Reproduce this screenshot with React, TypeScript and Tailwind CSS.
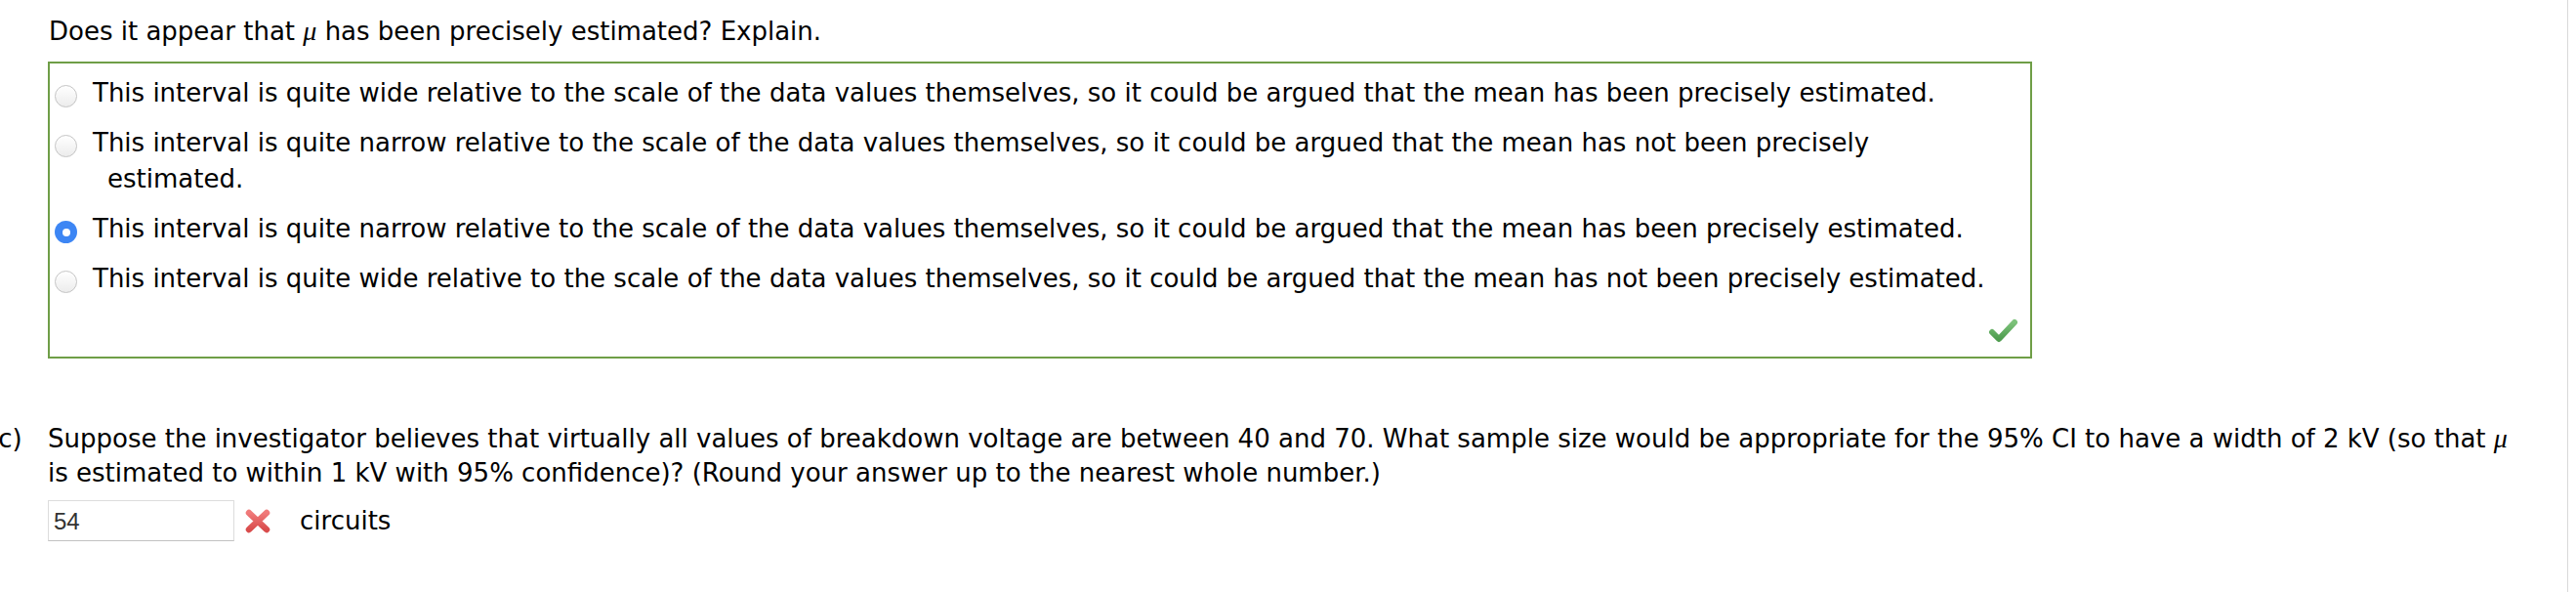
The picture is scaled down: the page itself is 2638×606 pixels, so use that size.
import React from "react";

const options = [
  {
    text: "This interval is quite wide relative to the scale of the data values themselves, so it could be argued that the mean has been precisely estimated.",
    selected: false,
  },
  {
    text: "This interval is quite narrow relative to the scale of the data values themselves, so it could be argued that the mean has not been precisely estimated.",
    selected: false,
    narrow: true,
  },
  {
    text: "This interval is quite narrow relative to the scale of the data values themselves, so it could be argued that the mean has been precisely estimated.",
    selected: true,
  },
  {
    text: "This interval is quite wide relative to the scale of the data values themselves, so it could be argued that the mean has not been precisely estimated.",
    selected: false,
  },
];

function Radio({ selected }: { selected: boolean }) {
  if (selected) {
    return (
      <div className="mt-[10px] flex h-[23px] w-[23px] shrink-0 items-center justify-center rounded-full bg-[#3d86f4]">
        <div className="h-[8px] w-[8px] rounded-full bg-white" />
      </div>
    );
  }
  return (
    <div className="mt-[10px] h-[23px] w-[23px] shrink-0 rounded-full border border-[#c4c4c4] bg-gradient-to-b from-white to-[#ececec] shadow-[inset_0_1px_1px_rgba(255,255,255,0.9)]" />
  );
}

function Mu() {
  return <span className="font-['Liberation_Serif',serif] italic text-[28px]">μ</span>;
}

export default function App() {
  return (
    <div className="relative h-[606px] w-[2638px] overflow-hidden bg-white font-['DejaVu_Sans','Verdana',sans-serif] text-[26px] leading-[37px] text-black">
      <div className="pl-[50px] pt-[13px]">
        Does it appear that <Mu /> has been precisely estimated? Explain.
      </div>

      <div className="ml-[49px] mt-[12px] flex w-[2032px] flex-col border-2 border-[#6f9e47] pb-[14px] pl-[5px] pr-[12px] pt-[12px]">
        <div className="flex flex-col gap-[14px]">
          {options.map((o, i) => (
            <div key={i} className="flex items-start">
              <Radio selected={o.selected} />
              <div
                className={`ml-[31px] indent-[-15px] ${o.narrow ? "w-[1850px]" : ""}`}
              >
                {o.text}
              </div>
            </div>
          ))}
        </div>
        <div className="mt-[22px] flex justify-end">
          <svg width="31" height="25" viewBox="0 0 31 25">
            <defs>
              <linearGradient id="gc" x1="0" y1="0" x2="0" y2="1">
                <stop offset="0" stopColor="#7cc27a" />
                <stop offset="1" stopColor="#4f9d4f" />
              </linearGradient>
            </defs>
            <path
              d="M4 14 L11 21 L27 4"
              fill="none"
              stroke="url(#gc)"
              strokeWidth="6"
              strokeLinecap="round"
              strokeLinejoin="round"
            />
          </svg>
        </div>
      </div>

      <div className="mt-[64px] flex">
        <div className="ml-[-12px] w-[61px] shrink-0">(c)</div>
        <div className="w-[2545px] leading-[35px]">
          Suppose the investigator believes that virtually all values of breakdown voltage are between 40 and 70. What
          sample size would be appropriate for the 95% CI to have a width of 2 kV (so that <Mu /> is estimated to within
          1 kV with 95% confidence)? (Round your answer up to the nearest whole number.)
        </div>
      </div>

      <div className="ml-[49px] mt-[10px] flex items-center">
        <div className="flex h-[42px] w-[191px] items-center border border-[#dcdcdc] border-b-[#c2c2c2] pl-[5px] font-['Liberation_Sans',Arial,sans-serif] text-[24px] text-[#333]">
          54
        </div>
        <svg className="ml-[10px]" width="28" height="27" viewBox="0 0 28 27">
          <defs>
            <linearGradient id="gx" x1="0" y1="0" x2="0" y2="1">
              <stop offset="0" stopColor="#f07a7a" />
              <stop offset="1" stopColor="#d94c4c" />
            </linearGradient>
          </defs>
          <path
            d="M5 5 L23 22 M23 5 L5 22"
            fill="none"
            stroke="url(#gx)"
            strokeWidth="6.5"
            strokeLinecap="round"
          />
        </svg>
        <span className="ml-[29px]">circuits</span>
      </div>

      <div className="absolute right-[8px] top-0 h-full w-px bg-[#d9d9d9]" />
    </div>
  );
}
